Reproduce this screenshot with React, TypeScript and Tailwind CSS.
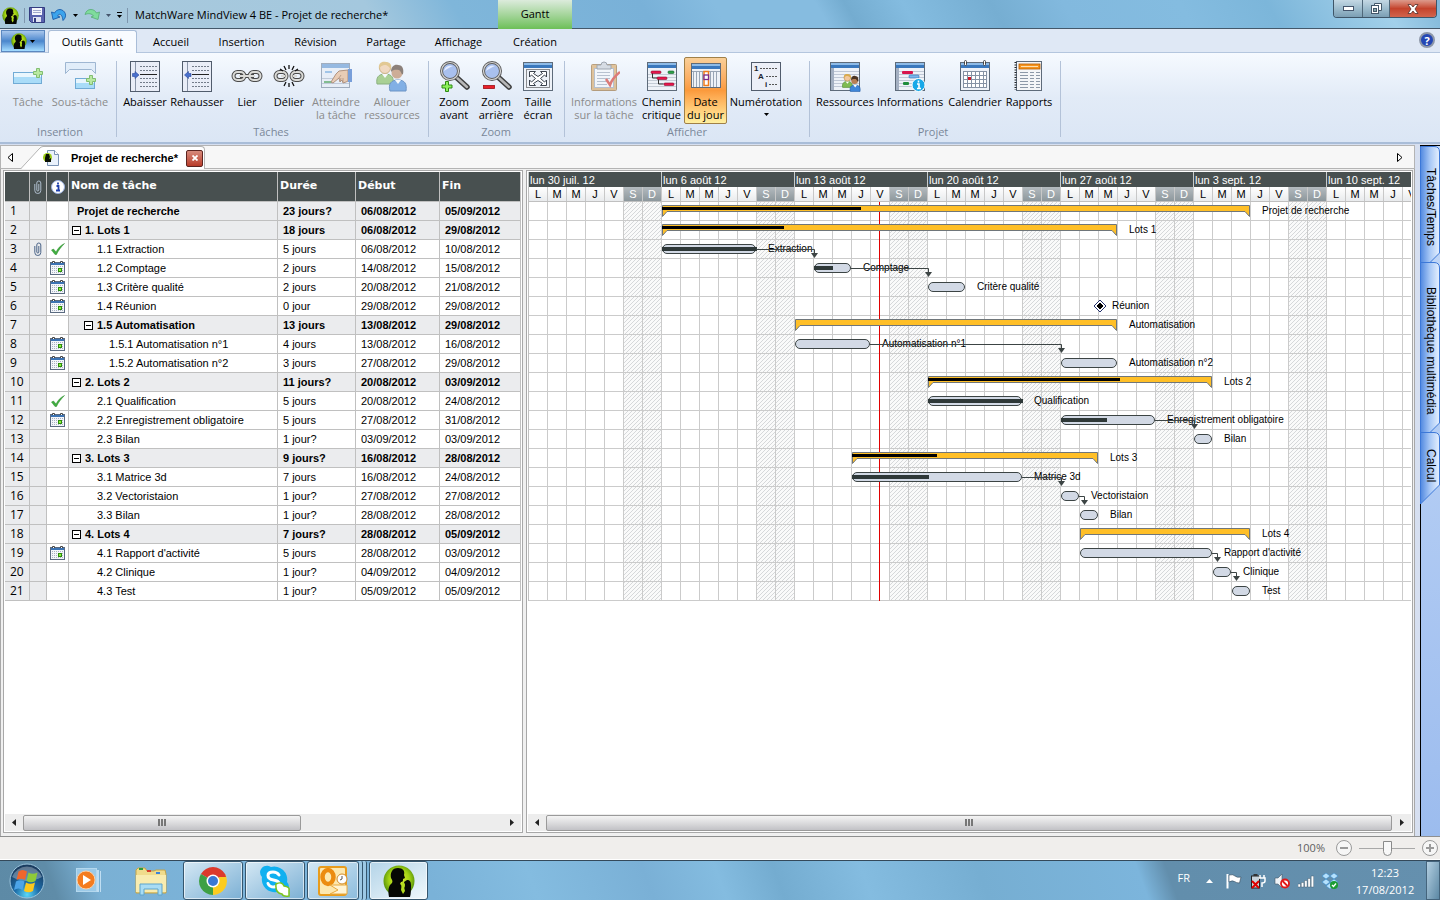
import React from 'react';
import clsx from 'clsx';

interface Task {
  id: number;
  name: string;
  duration: string;
  start: string;
  end: string;
  level: number;
  summary?: boolean;
  mark?: 'check' | 'calendar';
  clip?: boolean;
  // chart values, in days counted from monday 30 july
  from: number;
  to: number;
  progress?: number;
  milestone?: boolean;
  label?: string;
}

const TASKS: Task[] = [
  { id: 1, name: 'Projet de recherche', duration: '23 jours?', start: '06/08/2012', end: '05/09/2012', level: 0, summary: true, from: 7, to: 38, progress: 199 },
  { id: 2, name: '1. Lots 1', label: 'Lots 1', duration: '18 jours', start: '06/08/2012', end: '29/08/2012', level: 1, summary: true, from: 7, to: 31, progress: 122 },
  { id: 3, name: '1.1 Extraction', label: 'Extraction', duration: '5 jours', start: '06/08/2012', end: '10/08/2012', level: 2, mark: 'check', clip: true, from: 7, to: 12, progress: 95 },
  { id: 4, name: '1.2 Comptage', label: 'Comptage', duration: '2 jours', start: '14/08/2012', end: '15/08/2012', level: 2, mark: 'calendar', from: 15, to: 17, progress: 19 },
  { id: 5, name: '1.3 Critère qualité', label: 'Critère qualité', duration: '2 jours', start: '20/08/2012', end: '21/08/2012', level: 2, mark: 'calendar', from: 21, to: 23 },
  { id: 6, name: '1.4 Réunion', label: 'Réunion', duration: '0 jour', start: '29/08/2012', end: '29/08/2012', level: 2, mark: 'calendar', from: 30, to: 30, milestone: true },
  { id: 7, name: '1.5 Automatisation', label: 'Automatisation', duration: '13 jours', start: '13/08/2012', end: '29/08/2012', level: 2, summary: true, from: 14, to: 31 },
  { id: 8, name: '1.5.1 Automatisation n°1', label: 'Automatisation n°1', duration: '4 jours', start: '13/08/2012', end: '16/08/2012', level: 3, mark: 'calendar', from: 14, to: 18 },
  { id: 9, name: '1.5.2 Automatisation n°2', label: 'Automatisation n°2', duration: '3 jours', start: '27/08/2012', end: '29/08/2012', level: 3, mark: 'calendar', from: 28, to: 31 },
  { id: 10, name: '2. Lots 2', label: 'Lots 2', duration: '11 jours?', start: '20/08/2012', end: '03/09/2012', level: 1, summary: true, from: 21, to: 36, progress: 192 },
  { id: 11, name: '2.1 Qualification', label: 'Qualification', duration: '5 jours', start: '20/08/2012', end: '24/08/2012', level: 2, mark: 'check', from: 21, to: 26, progress: 95 },
  { id: 12, name: '2.2 Enregistrement obligatoire', label: 'Enregistrement obligatoire', duration: '5 jours', start: '27/08/2012', end: '31/08/2012', level: 2, mark: 'calendar', from: 28, to: 33, progress: 46 },
  { id: 13, name: '2.3 Bilan', label: 'Bilan', duration: '1 jour?', start: '03/09/2012', end: '03/09/2012', level: 2, from: 35, to: 36 },
  { id: 14, name: '3. Lots 3', label: 'Lots 3', duration: '9 jours?', start: '16/08/2012', end: '28/08/2012', level: 1, summary: true, from: 17, to: 30, progress: 85 },
  { id: 15, name: '3.1 Matrice 3d', label: 'Matrice 3d', duration: '7 jours', start: '16/08/2012', end: '24/08/2012', level: 2, from: 17, to: 26, progress: 77 },
  { id: 16, name: '3.2 Vectoristaion', label: 'Vectoristaion', duration: '1 jour?', start: '27/08/2012', end: '27/08/2012', level: 2, from: 28, to: 29 },
  { id: 17, name: '3.3 Bilan', label: 'Bilan', duration: '1 jour?', start: '28/08/2012', end: '28/08/2012', level: 2, from: 29, to: 30 },
  { id: 18, name: '4. Lots 4', label: 'Lots 4', duration: '7 jours?', start: '28/08/2012', end: '05/09/2012', level: 1, summary: true, from: 29, to: 38 },
  { id: 19, name: "4.1 Rapport d'activité", label: "Rapport d'activité", duration: '5 jours', start: '28/08/2012', end: '03/09/2012', level: 2, mark: 'calendar', from: 29, to: 36 },
  { id: 20, name: '4.2 Clinique', label: 'Clinique', duration: '1 jour?', start: '04/09/2012', end: '04/09/2012', level: 2, from: 36, to: 37 },
  { id: 21, name: '4.3 Test', label: 'Test', duration: '1 jour?', start: '05/09/2012', end: '05/09/2012', level: 2, from: 37, to: 38 },
];

// [id of the source task, x of the arrow that points at the next row]
const LINKS: [number, number][] = [
  [3, 285],
  [4, 399],
  [8, 532],
  [12, 665],
  [15, 532],
  [16, 555],
  [19, 688],
  [20, 707],
];

const WEEKS = ['lun 30 juil. 12', 'lun 6 août 12', 'lun 13 août 12', 'lun 20 août 12', 'lun 27 août 12', 'lun 3 sept. 12', 'lun 10 sept. 12'];
const DAYS = ['L', 'M', 'M', 'J', 'V', 'S', 'D'];
const DAY = 19;
const ROW = 19;
const TODAY = 350;

/* ---------- icons ---------- */

const Logo = ({ className }: { className?: string }) => (
  <svg viewBox="0 0 32 32" className={className}>
    <defs>
      <radialGradient id="logo-green" cx="50%" cy="45%" r="55%">
        <stop offset="0" stopColor="#e6f23a" />
        <stop offset="0.6" stopColor="#a4d414" />
        <stop offset="1" stopColor="#4f8c0a" />
      </radialGradient>
    </defs>
    <circle cx="16" cy="16" r="15.5" fill="url(#logo-green)" />
    <path d="M6 32c-1-6-1-11 3-14 1-2 0-3-1-5-1-5 1-10 7-10 5 0 7 3 6 7l1 3-2 1c0 2 0 3-2 3l-1 2c2 1 2 4 3 7l2-5-1-4 3-2c3 0 4 2 4 5 0 5 0 9-1 12z" fill="#060804" />
    <path d="M19 17l3 2-1 3 1 4-2 3-2-4z" fill="#b4dc20" />
  </svg>
);

const Win = ({ children, faded }: { children?: React.ReactNode; faded?: boolean }) => (
  <svg viewBox="0 0 32 32" className={clsx('size-8', faded && 'opacity-50')}>
    <rect x="1.5" y="2.5" width="29" height="28" fill="#eef2f8" stroke="#5e6b7a" />
    <rect x="2" y="3" width="28" height="5" fill="#3a78bd" />
    <rect x="2" y="3" width="28" height="2" fill="#8dbbe8" />
    {children}
  </svg>
);

const People = ({ x = 0, y = 0, s = 1 }: { x?: number; y?: number; s?: number }) => (
  <g transform={`translate(${x} ${y}) scale(${s})`}>
    <path d="M1 24c-1-6 1-10 8-10s9 4 8 10z" fill="#7fbb52" stroke="#4d8730" />
    <path d="M6 14l3 4 3-4z" fill="#fff" />
    <circle cx="9" cy="8" r="5.5" fill="#f2c79b" stroke="#b98a3c" />
    <path d="M3 9C2 3 6 1 10 2c5 0 6 4 5 8-1-3-4-5-6-5S4 6 3 9z" fill="#d9ab4f" />
    <path d="M14 31c-2-7 1-11 8-11s9 4 8 11z" fill="#3f86d8" stroke="#1f5aa4" />
    <path d="M19 20l3 4 3-4z" fill="#fff" />
    <circle cx="21" cy="13" r="5.5" fill="#b87f55" />
    <path d="M15 12c0-6 4-8 7-7 5 0 6 5 5 9-1 2-2-3-4-4-3 0-5-1-8 2z" fill="#4a3424" />
  </g>
);

const PlusMark = ({ x, y }: { x: number; y: number }) => (
  <path transform={`translate(${x} ${y})`} d="M3.5 .5h3v3h3v3h-3v3h-3v-3h-3v-3h3z" fill="#a4e67c" stroke="#55a838" />
);

const TaskIcon = () => (
  <svg viewBox="0 0 32 32" className="size-8 opacity-70">
    <rect x="1.5" y="12.5" width="28" height="11" fill="#8fd4f8" stroke="#3f8ec6" />
    <rect x="2" y="13" width="27" height="4" fill="#e8f8ff" />
    <PlusMark x={21} y={8} />
  </svg>
);

const SubTaskIcon = () => (
  <svg viewBox="0 0 32 32" className="size-8 opacity-70">
    <path d="M1.500 13.500V2.500h30v11l-4-4h-22z" fill="#dceaf8" stroke="#7c9cc0" />
    <rect x="11.500" y="18.500" width="19" height="10" fill="#8fd4f8" stroke="#3f8ec6" />
    <rect x="12" y="19" width="18" height="4" fill="#e8f8ff" />
    <PlusMark x={22} y={15} />
  </svg>
);

const IndentIcon = ({ out }: { out?: boolean }) => (
  <svg viewBox="0 0 32 32" className="size-8">
    <rect x="1.500" y="1.500" width="29" height="30" fill="#e9edf7" stroke="#515c6c" />
    <path d="M6.500 2v29" stroke="#8a95a8" />
    <path d="M11 6.500h17M11 10.500h17M11 18.500h17M11 22.500h17M11 26.500h17" stroke="#737c8a" strokeDasharray="2 1" />
    <path d="M11 14.500h17" stroke="#222" />
    {out ? (
      <path d="M10 13.500H7.500v-2L3.500 15l4 3.500v-2H10z" fill="#4a70cc" stroke="#2848a0" strokeWidth=".6" />
    ) : (
      <path d="M3.500 13.500H6v-2l4 3.500-4 3.500v-2H3.500z" fill="#4a70cc" stroke="#2848a0" strokeWidth=".6" />
    )}
  </svg>
);

const ChainIcon = ({ broken }: { broken?: boolean }) => (
  <svg viewBox="0 0 32 32" className="size-8" fill="none">
    <g stroke="#4a4a4a" strokeWidth="4">
      <rect x="2.500" y="12" width="11" height="8" rx="4" />
      <rect x="18.500" y="12" width="11" height="8" rx="4" />
      {!broken && <path d="M9 16h14" />}
    </g>
    <g stroke="#dcdcd8" strokeWidth="2">
      <rect x="2.500" y="12" width="11" height="8" rx="4" />
      <rect x="18.500" y="12" width="11" height="8" rx="4" />
      <path d={broken ? 'M8 16h4M20 16h4' : 'M8 16h16'} />
    </g>
    {broken && (
      <path d="M16 5v4M11 6l2 4M21 6l-2 4M7 9l3 2M25 9l-3 2M16 23v4M11 26l2-4M21 26l-2-4" stroke="#111" strokeWidth="1.300" />
    )}
  </svg>
);

const GoToIcon = () => (
  <svg viewBox="0 0 32 32" className="size-8 opacity-60">
    <rect x="1.500" y="3.500" width="28" height="24" fill="#e6ecf5" stroke="#6f7f95" />
    <rect x="2" y="4" width="27" height="4" fill="#5b92d0" />
    <path d="M2 18.500h27M2 23.500h27" stroke="#a6b2c4" />
    <rect x="4" y="21" width="8" height="2" fill="#3f9a4c" />
    <rect x="5" y="11" width="7" height="2" fill="#6fa6dc" />
    <path d="M11 22l2 1 6-5 1 4 2-2 1 3 3-1 2-1V10l-9 1-3 3z" fill="#e8b488" stroke="#8a5530" />
    <path d="M19 18l2-3M20 22l1-4M23 22v-4" stroke="#8a5530" strokeWidth=".8" />
    <rect x="28" y="9" width="4" height="13" fill="#2c68c4" />
  </svg>
);

const MagnifierIcon = ({ minus }: { minus?: boolean }) => (
  <svg viewBox="0 0 32 32" className="size-8">
    <path d="M18 17l11 10" stroke="#3e3e3e" strokeWidth="5.500" strokeLinecap="round" />
    <path d="M18 17l11 10" stroke="#b8b8b8" strokeWidth="2.500" strokeLinecap="round" />
    <circle cx="12" cy="11" r="8.500" fill="#a9c0ee" stroke="#5c5c5c" strokeWidth="3" />
    <circle cx="12" cy="11" r="8.500" fill="none" stroke="#d5d5d5" strokeWidth="1.200" />
    <path d="M6 11c1-5 5-6 9-5-3 1-6 3-9 5z" fill="#e2ebff" />
    {minus ? (
      <rect x="3.500" y="25.500" width="11" height="3" fill="#e8202a" stroke="#9c1016" strokeWidth=".8" />
    ) : (
      <path d="M7.500 21.500h3v3.500h3.500v3h-3.500v3.500h-3V28H4v-3h3.500z" fill="#8cf05c" stroke="#2f8a14" />
    )}
  </svg>
);

const FitIcon = () => (
  <Win>
    <rect x="4.500" y="9.500" width="23" height="18" fill="none" stroke="#222" strokeDasharray="1 1" />
    <path d="M7.500 11.500h6l-2 2 4.500 3 4.500-3-2-2h6v5.500l-2-2-4 3.500 4 3.500 2-2v5.500h-6l2-2-4.500-3-4.500 3 2 2h-6V20l2 2 4-3.500-4-3.500-2 2z" fill="#fff" stroke="#3c434d" />
  </Win>
);

const ClipboardIcon = () => (
  <svg viewBox="0 0 32 32" className="size-8 opacity-60">
    <rect x="3.500" y="4.500" width="25" height="26" rx="1" fill="#d7a35c" stroke="#94672c" />
    <rect x="6.500" y="8.500" width="19" height="19" fill="#f6f8fb" stroke="#93a0b2" />
    <path d="M9 12.500h13M9 15.500h13M9 18.500h13M9 21.500h10M9 24.500h10" stroke="#96a2b4" />
    <path d="M9 5h4a3 3 0 0 1 6 0h4v4H9z" fill="#c6ccd4" stroke="#68727f" />
    <path d="M18 19l4 6c2-6 5-9 10-13" stroke="#d42c22" strokeWidth="2.500" fill="none" />
  </svg>
);

const CriticalIcon = () => (
  <Win>
    <path d="M2 14.500h28M2 17.500h28M2 20.500h28M2 23.500h28M2 26.500h28" stroke="#c4ccd6" />
    <path d="M6.500 13v5h5M12.500 19v5h5" stroke="#333" fill="none" />
    <rect x="5" y="11" width="10" height="2.500" rx="1" fill="#e8144c" stroke="#8a0a2c" strokeWidth=".6" />
    <rect x="22" y="11" width="6" height="2.500" rx="1" fill="#2ea24a" stroke="#146028" strokeWidth=".6" />
    <rect x="11" y="17" width="10" height="2.500" rx="1" fill="#e8144c" stroke="#8a0a2c" strokeWidth=".6" />
    <rect x="18" y="23" width="10" height="2.500" rx="1" fill="#e8144c" stroke="#8a0a2c" strokeWidth=".6" />
  </Win>
);

const TodayIcon = () => (
  <svg viewBox="0 0 32 32" className="size-8">
    <rect x="1.500" y="3.500" width="29" height="24" fill="#eef2f8" stroke="#5e6b7a" />
    <rect x="2" y="4" width="28" height="5" fill="#3a78bd" />
    <rect x="2" y="4" width="28" height="2" fill="#8dbbe8" />
    <path d="M2 11.500h28M3.500 12v15M6.500 12v15M9.500 12v15M12.500 12v15M20.500 12v15M23.500 12v15M26.500 12v15" stroke="#9aa6b6" />
    <rect x="14" y="11.500" width="4.500" height="14" fill="#fff" stroke="#f07c1c" strokeWidth="1.500" />
    <rect x="14" y="15" width="4.500" height="4.500" fill="#fff" stroke="#7a2a8a" strokeWidth="1.300" />
  </svg>
);

const NumberingIcon = () => (
  <svg viewBox="0 0 32 32" className="size-8">
    <rect x="1.500" y="2.500" width="29" height="28" fill="#eceff7" stroke="#515c6c" />
    <g fontFamily="Liberation Sans, sans-serif" fontWeight="bold" fontSize="8" fill="#1c2430">
      <text x="4" y="11">1</text>
      <text x="8" y="19">A</text>
      <text x="15" y="27">i</text>
    </g>
    <path d="M10 8.500h18M16 16.500h12M19 24.500h9" stroke="#555" strokeDasharray="2 1" />
  </svg>
);

const Lines = () => (
  <>
    <rect x="2" y="8" width="3" height="22" fill="#a4b0c2" />
    <path d="M5 11.500h25M5 14.500h25M5 17.500h25M5 20.500h25M5 23.500h25M5 26.500h25" stroke="#c0c8d6" />
  </>
);

const ResourcesIcon = () => (
  <Win>
    <Lines />
    <People x={13} y={13} s={0.6} />
  </Win>
);

const InfoIcon = () => (
  <Win>
    <Lines />
    <rect x="8" y="11" width="11" height="3" rx="1" fill="#d8144c" />
    <rect x="15" y="15" width="10" height="3" rx="1" fill="#7ab8ee" stroke="#2e6cb0" strokeWidth=".6" />
    <rect x="9" y="22" width="6" height="3" rx="1" fill="#1f8c3c" />
    <circle cx="24.500" cy="25" r="6.500" fill="#18a8e8" stroke="#fff" />
    <path d="M24.500 20.500v2M23 24h2v4M23 28.500h4" stroke="#fff" strokeWidth="1.600" fill="none" />
  </Win>
);

const CalendarIcon = () => (
  <Win>
    <rect x="4.500" y="11.500" width="23" height="16" fill="#fff" stroke="#8592a4" />
    <path d="M4 15.500h24M4 19.500h24M4 23.500h24M8.500 12v16M12.500 12v16M16.500 12v16M20.500 12v16M24.500 12v16" stroke="#8592a4" />
    <rect x="9" y="17" width="3" height="3" fill="#d01828" />
    <rect x="5.500" y=".500" width="2" height="5" rx="1" fill="#fff" stroke="#444" />
    <rect x="24.500" y=".500" width="2" height="5" rx="1" fill="#fff" stroke="#444" />
  </Win>
);

const ReportIcon = () => (
  <svg viewBox="0 0 32 32" className="size-8">
    <rect x="3.500" y="1.500" width="25" height="29" fill="#f4f5f8" stroke="#5e6b7a" />
    <path d="M2.500 2v28" stroke="#222" strokeWidth="2" strokeDasharray="1 1.500" />
    <rect x="6" y="4" width="21" height="5" fill="#f7941e" stroke="#b45c04" strokeWidth=".8" />
    <path d="M8 6.500h17" stroke="#fde0b0" />
    <path d="M7 12.500h8M17 12.500h4M23 12.500h4M7 15.500h8M17 15.500h4M23 15.500h4M7 18.500h8M17 18.500h4M23 18.500h4M7 21.500h8M17 21.500h4M23 21.500h4M7 24.500h8M17 24.500h4M23 24.500h4M7 27.500h8M17 27.500h4M23 27.500h4" stroke="#8d98a8" />
  </svg>
);

const PaperclipIcon = ({ light }: { light?: boolean }) => (
  <svg viewBox="0 0 8 14" className="h-[14px] w-2" fill="none">
    <path d="M.8 4v6.500a3 3 0 0 0 6 0V3a2 2 0 0 0-4 0v7a1 1 0 0 0 2 0V4" stroke={light ? '#aebccc' : '#4b6488'} />
  </svg>
);

const CheckIcon = () => (
  <svg viewBox="0 0 14 12" className="h-3 w-[14px]">
    <path d="M.5 7l2-1 2.500 3C7 5 10 2 13.500.5 10 4 7 8 5.500 11.500H4z" fill="#3fae3f" stroke="#2f8a2f" strokeWidth=".5" />
  </svg>
);

const SmallCalendarIcon = () => (
  <svg viewBox="0 0 16 16" className="size-4">
    <rect x=".5" y="2.500" width="14" height="12" fill="#f4f6fa" stroke="#5a6a80" />
    <rect x="1" y="3" width="13" height="2" fill="#3d74b4" />
    <path d="M2.500 6v8M4.500 6v8M6.500 6v8M8.500 6v8M10.500 6v8M12.500 6v8" stroke="#a8b2c2" strokeDasharray="1 1" />
    <rect x="8.500" y="8.500" width="3" height="3" fill="#8cf03c" stroke="#2c8c0c" />
    <path d="M2.500 3V1.500h2V3M10.500 3V1.500h2V3" stroke="#444" fill="#fff" />
  </svg>
);

const Caret = ({ className }: { className?: string }) => (
  <svg viewBox="0 0 5 3" className={clsx('h-[3px] w-[5px]', className)}>
    <path d="M0 0h5L2.500 3z" fill="currentColor" />
  </svg>
);

/* ---------- title bar ---------- */

const TitleBar = () => (
  <header className="relative flex h-[29px] shrink-0 items-center border-b border-[#44586a] bg-[linear-gradient(60deg,#a9c9dc_0%,#a4c8de_26%,#7fb6da_32%,#79b1d8_45%,#86bce0_50%,#86bce0_57%,#74acd0_59%,#84bce0_63%,#76aed2_69%,#82b9de_74%,#84bce0_82%,#7cb6da_88%,#a2d0ea_96%,#7fb6d8_100%)] pt-[2px] pl-[2px] text-[11px] text-black">
    <Logo className="size-[17px]" />
    <span className="ml-[5px] h-[15px] w-px bg-slate-500/60" />
    <button aria-label="Enregistrer" className="ml-1">
      <svg viewBox="0 0 16 16" className="size-4">
        <path d="M.5.5h15v15h-13l-2-2z" fill="#5a63ae" stroke="#343c80" />
        <rect x="3" y="1" width="10" height="7" fill="#f4f6fc" />
        <path d="M4 3.500h8M4 5.500h8" stroke="#a0a8cc" />
        <rect x="4" y="10" width="8" height="5" fill="#dfe3f2" />
        <rect x="5" y="11" width="2" height="4" fill="#343c80" />
      </svg>
    </button>
    <button aria-label="Annuler" className="ml-[6px] flex items-center gap-[6px]">
      <svg viewBox="0 0 16 14" className="h-[14px] w-4">
        <path d="M.5 4l1.500 7.500L9 9 6.500 8C8 5.500 11 5 12 12.500 17 8 14 2 9 1.500 6.500 1.500 4.500 3 3.500 5z" fill="#3ca4ec" stroke="#1a5cac" strokeWidth=".9" />
      </svg>
      <Caret />
    </button>
    <button aria-label="Rétablir" className="ml-[6px] flex items-center gap-[6px] text-slate-600">
      <svg viewBox="0 0 16 14" className="h-[14px] w-4">
        <path d="M15.500 4L14 11.500 7 9l2.500-1C8 5.500 4 5 1 6.500 2 3 4 1.500 7 1.500 9.500 1.500 11.500 3 12.500 5z" fill="#7fdc9c" stroke="#5cb07c" strokeWidth=".9" />
      </svg>
      <Caret />
    </button>
    <button aria-label="Personnaliser la barre" className="ml-[6px] flex flex-col items-center gap-[2px]">
      <span className="h-px w-[5px] bg-black" />
      <Caret />
    </button>
    <span className="mr-[7px] ml-[5px] h-[15px] w-px bg-slate-500/60" />
    <h1>MatchWare MindView 4 BE - Projet de recherche*</h1>

    {/* contextual tab title */}
    <div className="absolute top-0 left-[498px] flex h-[29px] w-[74px] items-center justify-center bg-linear-to-b from-[#dcebdc] to-[#6cbf57]">Gantt</div>

    <div className="absolute top-0 right-[3px] flex h-[18px] overflow-hidden rounded-b border border-t-0 border-[#3e5568] text-white">
      <button aria-label="Réduire" className="flex w-7 items-center justify-center bg-linear-to-b from-[#c4d8e4] via-[#9dbccd] to-[#7c9fb4]">
        <span className="h-[5px] w-[11px] border border-slate-600 bg-white" />
      </button>
      <button aria-label="Restaurer" className="flex w-[27px] items-center justify-center border-l border-[#4f687a] bg-linear-to-b from-[#c4d8e4] via-[#9dbccd] to-[#7c9fb4]">
        <svg viewBox="0 0 11 11" className="size-[11px]">
          <path d="M3.500 3V.5h7v7H8" fill="#fff" stroke="#44586a" />
          <rect x=".5" y="2.500" width="7" height="8" fill="#fff" stroke="#44586a" />
          <rect x="2.500" y="5.500" width="3" height="3" fill="#8aa" stroke="#44586a" />
        </svg>
      </button>
      <button aria-label="Fermer" className="flex w-[47px] items-center justify-center border-l border-[#4f687a] bg-linear-to-b from-[#dc9a8c] via-[#c4432c] to-[#d2644c]">
        <svg viewBox="0 0 12 10" className="h-[10px] w-3">
          <path d="M1 .5h3l2 2.500L8 .5h3L8 5l3 4.500H8L6 7 4 9.500H1L4 5z" fill="#fff" stroke="#54302c" strokeWidth=".8" />
        </svg>
      </button>
    </div>
  </header>
);

/* ---------- ribbon ---------- */

const TABS = [
  { label: 'Accueil', width: 'w-[68px]' },
  { label: 'Insertion', width: 'w-[73px]' },
  { label: 'Révision', width: 'w-[75px]' },
  { label: 'Partage', width: 'w-[66px]' },
  { label: 'Affichage', width: 'w-[79px]' },
  { label: 'Création', width: 'w-[74px]' },
];

interface Tool {
  lines: string[];
  icon: React.ReactNode;
  width: string;
  disabled?: boolean;
  active?: boolean;
  menu?: boolean;
}

const GROUPS: { title: string; pad: string; tools: Tool[] }[] = [
  {
    title: 'Insertion',
    pad: 'pl-2 pr-1',
    tools: [
      { lines: ['Tâche'], icon: <TaskIcon />, width: 'w-10', disabled: true },
      { lines: ['Sous-tâche'], icon: <SubTaskIcon />, width: 'w-16', disabled: true },
    ],
  },
  {
    title: 'Tâches',
    pad: 'pl-1 pr-[7px]',
    tools: [
      { lines: ['Abaisser'], icon: <IndentIcon />, width: 'w-12' },
      { lines: ['Rehausser'], icon: <IndentIcon out />, width: 'w-14' },
      { lines: ['Lier'], icon: <ChainIcon />, width: 'w-11' },
      { lines: ['Délier'], icon: <ChainIcon broken />, width: 'w-10' },
      { lines: ['Atteindre', 'la tâche'], icon: <GoToIcon />, width: 'w-[54px]', disabled: true },
      {
        lines: ['Allouer', 'ressources'],
        icon: <svg viewBox="0 0 32 32" className="size-8 opacity-60"><People /></svg>,
        width: 'w-[58px]',
        disabled: true,
      },
    ],
  },
  {
    title: 'Zoom',
    pad: 'pl-1 pr-[5px]',
    tools: [
      { lines: ['Zoom', 'avant'], icon: <MagnifierIcon />, width: 'w-[42px]' },
      { lines: ['Zoom', 'arrière'], icon: <MagnifierIcon minus />, width: 'w-[42px]' },
      { lines: ['Taille', 'écran'], icon: <FitIcon />, width: 'w-[42px]' },
    ],
  },
  {
    title: 'Afficher',
    pad: 'pl-1 pr-1',
    tools: [
      { lines: ['Informations', 'sur la tâche'], icon: <ClipboardIcon />, width: 'w-[70px]', disabled: true },
      { lines: ['Chemin', 'critique'], icon: <CriticalIcon />, width: 'w-[45px]' },
      { lines: ['Date', 'du jour'], icon: <TodayIcon />, width: 'w-[43px]', active: true },
      { lines: ['Numérotation'], icon: <NumberingIcon />, width: 'w-[78px]', menu: true },
    ],
  },
  {
    title: 'Projet',
    pad: 'pl-1 pr-2',
    tools: [
      { lines: ['Ressources'], icon: <ResourcesIcon />, width: 'w-[62px]' },
      { lines: ['Informations'], icon: <InfoIcon />, width: 'w-[68px]' },
      { lines: ['Calendrier'], icon: <CalendarIcon />, width: 'w-[62px]' },
      { lines: ['Rapports'], icon: <ReportIcon />, width: 'w-[46px]' },
    ],
  },
];

const ToolButton = ({ tool }: { tool: Tool }) => (
  <button
    disabled={tool.disabled}
    className={clsx(
      'flex h-[67px] flex-col items-center border pt-[2px] leading-[13px] whitespace-nowrap',
      tool.width,
      tool.disabled ? 'text-[#8b8b8b]' : 'text-black',
      tool.active
        ? 'rounded-xs border-[#a08048] bg-linear-to-b from-[#f9cf98] from-0% via-[#fb9a3c] via-50% to-[#fff0a0] to-100%'
        : 'border-transparent'
    )}
  >
    {tool.icon}
    <span className="mt-[3px] flex flex-col items-center">
      {tool.lines.map((line) => (
        <span key={line}>{line}</span>
      ))}
    </span>
    {tool.menu && <Caret className="mt-[5px]" />}
  </button>
);

const Ribbon = () => (
  <nav className="shrink-0 border-b-2 border-[#a9bdd8] bg-[#dfe8f5] text-[11px] text-black">
    <div className="flex h-6 items-end border-b border-[#b4c6de] pl-px">
      <button aria-label="Menu MindView" className="flex h-[22px] w-[44px] items-center justify-center gap-[3px] border border-[#5c88c0] bg-linear-to-b from-[#a8c6ec] via-[#4a86cc] to-[#a4dcff]">
        <Logo className="size-4" />
        <Caret />
      </button>
      <button className="-mb-px ml-[3px] h-[23px] w-[89px] rounded-t-[3px] border border-b-0 border-[#a9bdd8] bg-[#f8fbff]">Outils Gantt</button>
      {TABS.map((tab) => (
        <button key={tab.label} className={clsx('h-[22px] pt-[2px]', tab.width)}>
          {tab.label}
        </button>
      ))}
      <button aria-label="Aide" className="mr-[5px] mb-1 ml-auto flex size-4 items-center justify-center rounded-full border-2 border-[#8d97a8] bg-[#2347b4] text-[11px] leading-none font-bold text-white">
        ?
      </button>
    </div>
    <div className="flex h-[89px] bg-linear-to-b from-[#f6faff] via-[#e2ebf7] to-[#dbe6f5] pt-1">
      {GROUPS.map((group) => (
        <section key={group.title} className="flex">
          <div className={clsx('flex flex-col', group.pad)}>
            <div className="flex">
              {group.tools.map((tool) => (
                <ToolButton key={tool.lines.join()} tool={tool} />
              ))}
            </div>
            <h2 className="text-center leading-4 text-[#7a8799]">{group.title}</h2>
          </div>
          <span className="mt-1 h-[76px] w-px bg-[#b3c2d8]" />
        </section>
      ))}
    </div>
  </nav>
);

/* ---------- document tabs ---------- */

const DocumentTabs = () => (
  <div className="flex h-6 shrink-0 items-end border border-[#b4b4b4] bg-[#f7f7f7]">
    <button aria-label="Onglet précédent" className="flex h-[22px] w-[20px] items-center pl-[6px]">
      <svg viewBox="0 0 6 9" className="h-[9px] w-[6px]">
        <path d="M5.500.5v8l-4.500-4z" fill="#fff" stroke="#000" />
      </svg>
    </button>
    <svg viewBox="0 0 22 23" className="-mb-px h-[23px] w-[22px]">
      <path d="M0 23L18 3Q20 .5 22 .5V23z" fill="#fff" />
      <path d="M0 22.500L18 3Q20 .5 22 .5" fill="none" stroke="#b4b4b4" />
    </svg>
    <div className="-mb-px flex h-[23px] w-[162px] items-center rounded-tr-sm border-t border-r border-[#b4b4b4] bg-white">
      <svg viewBox="0 0 16 16" className="size-4">
        <path d="M4.500.5h7l4 4v11h-11z" fill="#eaf2fc" stroke="#7a93b4" />
        <path d="M11.500.5v4h4" fill="#fff" stroke="#7a93b4" />
        <circle cx="4.500" cy="7.500" r="4.500" fill="#9ccc18" />
        <path d="M2 12V8l1-4h3l1 3-1 2 2-1v4z" fill="#0a1004" />
      </svg>
      <span className="ml-3 font-['Liberation_Sans',Arial,sans-serif] text-[11px] font-bold">Projet de recherche*</span>
      <button aria-label="Fermer le document" className="mr-px ml-auto flex size-[17px] items-center justify-center rounded-xs border border-[#5c2420] bg-linear-to-b from-[#d68a7c] to-[#b83a28]">
        <svg viewBox="0 0 6 6" className="size-[6px]">
          <path d="M.5.5l5 5M5.500.5l-5 5" stroke="#fff" strokeWidth="1.800" />
        </svg>
      </button>
    </div>
    <button aria-label="Onglet suivant" className="mr-[11px] ml-auto flex h-[22px] items-center">
      <svg viewBox="0 0 6 9" className="h-[9px] w-[6px]">
        <path d="M.5.5v8l4.500-4z" fill="#fff" stroke="#000" />
      </svg>
    </button>
  </div>
);

/* ---------- scroll bars ---------- */

const ScrollBar = ({ thumb }: { thumb: string }) => (
  <div className="flex h-[17px] shrink-0 items-center bg-[#ededed]">
    <button aria-label="Défiler à gauche" className="flex w-[18px] shrink-0 justify-center">
      <svg viewBox="0 0 4 7" className="h-[7px] w-1"><path d="M4 0v7L0 3.500z" fill="#222" /></svg>
    </button>
    <div className="min-w-0 flex-1">
      <div className={clsx('flex h-4 items-center justify-center gap-px rounded-xs border border-[#9a9a9a] bg-linear-to-b from-[#f4f4f4] via-[#dcdcde] via-50% to-[#c2c2c6]', thumb)}>
        <span className="h-[7px] w-[2px] bg-[#777]" />
        <span className="h-[7px] w-[2px] bg-[#777]" />
        <span className="h-[7px] w-[2px] bg-[#777]" />
      </div>
    </div>
    <button aria-label="Défiler à droite" className="flex w-[19px] shrink-0 justify-center">
      <svg viewBox="0 0 4 7" className="h-[7px] w-1"><path d="M0 0v7l4-3.500z" fill="#222" /></svg>
    </button>
  </div>
);

/* ---------- task table ---------- */

const indentOf = (task: Task) => {
  if (task.level === 0) return 'pl-2';
  if (task.summary) return task.level === 1 ? 'pl-[3px]' : 'pl-[15px]';
  return task.level === 2 ? 'pl-7' : 'pl-10';
};

const TaskTable = () => (
  <table className="w-full table-fixed border-separate border-spacing-0 font-['Liberation_Sans',Arial,sans-serif] text-[11px] text-black">
    <colgroup>
      <col className="w-[25px]" />
      <col className="w-[17px]" />
      <col className="w-[22px]" />
      <col className="w-[209px]" />
      <col className="w-[78px]" />
      <col className="w-[84px]" />
      <col />
    </colgroup>
    <thead>
      <tr className="h-[30px] bg-[#485050] text-left font-['DejaVu_Sans',Verdana,sans-serif] text-white [&>th]:border-r [&>th]:border-b [&>th]:border-[#c0c0c0] [&>th]:px-[2px] [&>th]:py-0">
        <th aria-label="Numéro" />
        <th aria-label="Pièce jointe"><span className="flex justify-center"><PaperclipIcon light /></span></th>
        <th aria-label="Information">
          <span className="flex justify-center">
            <svg viewBox="0 0 14 14" className="size-[14px]">
              <circle cx="7" cy="7" r="6.500" fill="#fff" stroke="#9ab0e0" />
              <path d="M7 2.500v2M5.500 6H7.500v4M5 10.500h4" stroke="#1c3cac" strokeWidth="1.800" fill="none" />
            </svg>
          </span>
        </th>
        <th>Nom de tâche</th>
        <th>Durée</th>
        <th>Début</th>
        <th>Fin</th>
      </tr>
    </thead>
    <tbody>
      {TASKS.map((task) => (
        <tr
          key={task.id}
          className={clsx(
            'leading-[18px] whitespace-nowrap [&>td]:h-[19px] [&>td]:overflow-hidden [&>td]:border-r [&>td]:border-b [&>td]:border-[#c0c0c0] [&>td]:py-0',
            task.summary && 'bg-[#ebecee] font-bold'
          )}
        >
          <td className="bg-[#ebecee] pl-[5px] font-['Open_Sans','Noto_Sans',sans-serif] text-[12px] font-normal">{task.id}</td>
          <td className="bg-[#ebecee]"><span className="flex justify-center">{task.clip && <PaperclipIcon />}</span></td>
          <td className="bg-white">
            <span className="flex justify-center">
              {task.mark === 'check' && <CheckIcon />}
              {task.mark === 'calendar' && <SmallCalendarIcon />}
            </span>
          </td>
          <td className={indentOf(task)}>
            <span className="flex items-center gap-1">
              {task.summary && task.level > 0 && (
                <button aria-label="Réduire le groupe" className="flex size-[9px] items-center justify-center border border-black bg-white">
                  <span className="h-px w-[5px] bg-black" />
                </button>
              )}
              {task.name}
            </span>
          </td>
          <td className="pl-[5px]">{task.duration}</td>
          <td className="pl-[5px]">{task.start}</td>
          <td className="pl-[5px]">{task.end}</td>
        </tr>
      ))}
    </tbody>
  </table>
);

/* ---------- gantt chart ---------- */

const SummaryBar = ({ x, y, w, progress }: { x: number; y: number; w: number; progress?: number }) => (
  <g>
    <path
      d={`M${x + 0.5} ${y + 3.5}H${x + w - 1.5}V${y + 14.5}L${x + w - 6} ${y + 9.5}H${x + 5}L${x + 0.5} ${y + 14.5}Z`}
      fill="#ffbf27"
      stroke="#6f767a"
    />
    {progress && <rect x={x} y={y + 5} width={progress} height="3" fill="#000" />}
  </g>
);

const TaskBar = ({ x, y, w, progress }: { x: number; y: number; w: number; progress?: number }) => (
  <g>
    <rect x={x + 0.5} y={y + 4.5} width={w - 2} height="9" rx="4.5" fill="#d2d9e5" stroke="#3c4444" />
    {progress && <rect x={x} y={y + 7} width={progress} height="4" fill="#2e3838" />}
  </g>
);

const GanttChart = () => {
  const days = Array.from({ length: 100 }, (_, i) => i);
  const height = TASKS.length * ROW;

  return (
    <div className="overflow-hidden font-['Liberation_Sans',Arial,sans-serif] text-black">
      <div className="flex h-[15px] bg-[#485050] text-[11px] leading-[17px] text-white">
        {WEEKS.map((week) => (
          <div key={week} className="w-[133px] shrink-0 border-l border-[#c8cccc] pl-px whitespace-nowrap">{week}</div>
        ))}
      </div>
      <div className="flex h-[15px] border-b border-l border-[#c0c0c0] text-[11px] leading-[14px]">
        {WEEKS.map((week) => (
          <div key={week} className="flex shrink-0">
            {DAYS.map((day, i) => (
              <span
                key={i}
                className={clsx(
                  'w-[19px] border-r border-[#c8c8c8] text-center',
                  i > 4 ? 'bg-linear-to-b from-[#b4bbbf] to-[#8d979c] text-white' : 'bg-linear-to-b from-white to-[#e9ebed]'
                )}
              >
                {day}
              </span>
            ))}
          </div>
        ))}
      </div>
      <div className="border-l border-[#c0c0c0]">
        <svg className="block w-full" height={height} role="img" aria-label="Diagramme de Gantt">
          <defs>
            <pattern id="hatch" width="4" height="4" patternUnits="userSpaceOnUse">
              <rect width="4" height="4" fill="#fafafa" />
              <path d="M-1 1L1-1M0 4L4 0M3 5L5 3" stroke="#d6d8da" strokeWidth="1" />
            </pattern>
          </defs>
          {days.filter((d) => d % 7 > 4).map((d) => (
            <rect key={d} x={d * DAY} y="0" width={DAY} height={height} fill="url(#hatch)" />
          ))}
          <g fill="#cbcbcb">
            {days.map((d) => (
              <rect key={d} x={d * DAY + DAY - 1} y="0" width="1" height={height} />
            ))}
            {TASKS.map((t) => (
              <rect key={t.id} x="0" y={t.id * ROW - 1} width="100%" height="1" />
            ))}
          </g>
          <rect x={TODAY} y="0" width="1" height={height} fill="#e00000" />
          {TASKS.map((t) => {
            const x = t.from * DAY;
            const y = (t.id - 1) * ROW;
            const w = (t.to - t.from) * DAY;
            return (
              <g key={t.id}>
                {t.summary && <SummaryBar x={x} y={y} w={w} progress={t.progress} />}
                {!t.summary && !t.milestone && <TaskBar x={x} y={y} w={w} progress={t.progress} />}
                {t.milestone && (
                  <>
                    <path d={`M${x - 5} ${y + 9}l6-6 6 6-6 6z`} fill="#fff" stroke="#22306c" />
                    <path d={`M${x - 2} ${y + 9}l3-3 3 3-3 3z`} fill="#000" stroke="#000" />
                  </>
                )}
                <text x={x + w + (t.milestone ? 13 : 11)} y={y + 12} fontSize="10">{t.label ?? t.name}</text>
              </g>
            );
          })}
          {LINKS.map(([id, x]) => {
            const source = TASKS[id - 1];
            const y = (id - 1) * ROW + 9;
            const tip = y + 9;
            return (
              <g key={id}>
                <path d={`M${source.to * DAY - 1} ${y + 0.5}H${x + 0.5}V${tip - 4}`} fill="none" stroke="#3c4444" />
                <path d={`M${x - 3} ${tip - 5}h7l-3.500 5z`} fill="#3c4444" />
              </g>
            );
          })}
        </svg>
      </div>
    </div>
  );
};

/* ---------- side tabs ---------- */

const SideTab = ({ label, size, path }: { label: string; size: string; path: string }) => (
  <button className={clsx('relative w-full text-[12px]', size)}>
    <svg className="absolute top-0 left-0 h-[190px] w-full overflow-visible" aria-hidden="true">
      <path d={path} fill="url(#side-tab)" stroke="#3c78d8" />
    </svg>
    <span className="relative inline-block [writing-mode:vertical-rl]">{label}</span>
  </button>
);

const SideTabs = () => (
  <aside className="flex w-5 shrink-0 flex-col border-t border-l border-black bg-linear-to-b from-[#c6daf8] to-[#9cbcee] font-['Liberation_Sans',Arial,sans-serif] text-black">
    <svg className="absolute size-0" aria-hidden="true">
      <defs>
        <linearGradient id="side-tab" x1="0" x2="1" y1="0" y2="0">
          <stop offset="0" stopColor="#5088e0" />
          <stop offset="0.5" stopColor="#a8c8f6" />
          <stop offset="1" stopColor="#e6f0fe" />
        </linearGradient>
      </defs>
    </svg>
    <SideTab label="Tâches/Temps" size="h-[116px] pt-3" path="M-.5.5H13Q18.500.5 18.500 6V107L-.5 126z" />
    <SideTab label="Bibliothèque multimédia" size="h-[170px] pt-3" path="M-.5.5H13Q18.500.5 18.500 6V161L-.5 180z" />
    <SideTab label="Calcul" size="h-[72px]" path="M-.5.5H13Q18.500.5 18.500 6V53L-.5 72z" />
  </aside>
);

/* ---------- status bar and taskbar ---------- */

const StatusBar = () => (
  <footer className="flex h-[24px] shrink-0 items-center justify-end border-t border-b border-t-[#8e8f8f] border-b-white bg-[#f0eeec] pr-[2px] text-[11px] text-[#5f5f5f]">
    <label htmlFor="zoom">100%</label>
    <button aria-label="Zoom arrière" className="ml-[11px] flex size-4 items-center justify-center rounded-full border border-[#9a9a9a] bg-[#f6f6f6]">
      <span className="h-[2px] w-2 bg-[#9a9a9a]" />
    </button>
    <input
      id="zoom"
      type="range"
      defaultValue={50}
      className="mx-[7px] h-4 w-[56px] appearance-none bg-transparent bg-[linear-gradient(#a8a8a8,#a8a8a8)] bg-[length:100%_1px] bg-center bg-no-repeat [&::-webkit-slider-thumb]:h-[15px] [&::-webkit-slider-thumb]:w-[9px] [&::-webkit-slider-thumb]:appearance-none [&::-webkit-slider-thumb]:rounded-b-full [&::-webkit-slider-thumb]:border [&::-webkit-slider-thumb]:border-[#8a8a8a] [&::-webkit-slider-thumb]:bg-[#f8f8f8]"
    />
    <button aria-label="Zoom avant" className="flex size-4 items-center justify-center rounded-full border border-[#9a9a9a] bg-[#f6f6f6]">
      <svg viewBox="0 0 8 8" className="size-2"><path d="M4 0v8M0 4h8" stroke="#9a9a9a" strokeWidth="2" /></svg>
    </button>
  </footer>
);

const appButton = 'flex h-[39px] items-center justify-center rounded-[3px] border border-[#35566e] shadow-[inset_0_0_0_1px_rgba(255,255,255,0.6)]';

const Taskbar = () => (
  <div className="flex h-10 shrink-0 items-center border-t border-[#34495a] bg-[linear-gradient(70deg,#5d8aa6_0%,#5f8ca8_4%,#7ab0d4_7%,#7cb5dc_20%,#7ab2d8_30%,#84bce0_37%,#7ab0d6_45%,#84bce0_50%,#74acd0_54%,#84bce0_60%,#76aed2_68%,#7cb5dc_79%,#628eac_81%,#6590ae_100%)] text-white">
    <button aria-label="Démarrer" className="ml-[9px]">
      <svg viewBox="0 0 36 36" className="size-9">
        <defs>
          <radialGradient id="orb" cx="50%" cy="90%" r="80%">
            <stop offset="0" stopColor="#5ad8f8" />
            <stop offset="0.45" stopColor="#1c6ca8" />
            <stop offset="1" stopColor="#1a3c60" />
          </radialGradient>
        </defs>
        <circle cx="18" cy="18" r="17" fill="url(#orb)" stroke="#9cc4dc" />
        <path d="M3 14a16 16 0 0 1 30 0q-15 8-30 0z" fill="#fff" opacity=".3" />
        <path d="M9.500 8.500q4-3 8.500 0l-2 8.500q-4-2.500-8.500 0z" fill="#f0662c" />
        <path d="M19.500 9.500q4 2.500 9 0L26.500 18q-4.500 2.500-9 0z" fill="#8fca38" />
        <path d="M7 18.500q4-2.500 8.500 0L13.500 27q-4-3-8.500 0z" fill="#4ca4e8" />
        <path d="M17 19.500q4 2.500 9 0L24 28q-4.500 2.500-9 0z" fill="#fcc81c" />
      </svg>
    </button>
    <button aria-label="Lecteur multimédia" className="ml-[29px]">
      <svg viewBox="0 0 32 28" className="h-7 w-8">
        <rect x="2.500" y="1.500" width="20" height="23" fill="#9ccae8" stroke="#b4d8ee" />
        <path d="M23 3h2v22h-2M26 4h1v21h-1" fill="#c0def2" />
        <circle cx="12" cy="13" r="9" fill="#f47c20" stroke="#fbd0a8" />
        <path d="M9 8v10l8-5z" fill="#fff" />
      </svg>
    </button>
    <button aria-label="Explorateur" className="ml-[28px]">
      <svg viewBox="0 0 34 30" className="h-[30px] w-[34px]">
        <path d="M2 4l2-2h7l2 3h7l2-1h9l1 4v19H2z" fill="#f0dc8c" stroke="#c4a448" />
        <rect x="5" y="2" width="4" height="2" fill="#2c9c3c" />
        <rect x="13" y="4" width="4" height="2" fill="#d83c2c" />
        <rect x="22" y="6" width="4" height="2" fill="#3c84d8" />
        <path d="M2 9h30v17H2z" fill="#f8ecb0" />
        <path d="M6 29V18h22v11h-4v-6H10v6z" fill="#a8dcf4" stroke="#5ca4cc" />
      </svg>
    </button>
    <button aria-label="Chrome" className={clsx(appButton, 'ml-[15px] w-[60px] bg-linear-to-br from-[#d4e8f4] to-[#7cb0d4]')}>
      <svg viewBox="0 0 30 30" className="size-[30px]">
        <path d="M15 15L2.900 8A14 14 0 0 1 27.100 8z" fill="#dc3a2c" />
        <path d="M15 15L27.100 8A14 14 0 0 1 15 29z" fill="#fccc20" />
        <path d="M15 15V29A14 14 0 0 1 2.900 8z" fill="#3ea044" />
        <path d="M15 8h12.100l.9 3H15z" fill="#dc3a2c" />
        <circle cx="15" cy="15" r="6.500" fill="#fff" />
        <circle cx="15" cy="15" r="5" fill="#3a78d4" />
      </svg>
    </button>
    <button aria-label="Skype" className={clsx(appButton, 'ml-[2px] w-[60px] bg-linear-to-br from-[#d4e8f4] to-[#7cb0d4]')}>
      <svg viewBox="0 0 32 32" className="size-8">
        <path d="M1 7a7 7 0 0 1 11-5 13 13 0 0 1 16 15 7 7 0 0 1-10 10A13 13 0 0 1 3 12Q1 10 1 7z" fill="#10b0f0" />
        <path d="M20 10q-2-3-6-3-5 0-5 3.500t5.500 4.500 5.500 3.500-5 3.500q-4.500 0-6-3.500" fill="none" stroke="#fff" strokeWidth="3" strokeLinecap="round" />
        <path d="M17 19q6-3 8 2 6 1 5 4v6q-6 1-7-2-7-1-6-10z" fill="#fff" stroke="#7cc41c" strokeWidth="1.500" />
      </svg>
    </button>
    <button aria-label="Outlook" className={clsx(appButton, 'ml-[2px] w-[52px] bg-linear-to-br from-[#d4e8f4] to-[#8cbcdc]')}>
      <svg viewBox="0 0 32 32" className="size-8">
        <rect x="2" y="2" width="27" height="28" rx="2" fill="#fce8b0" stroke="#e89c1c" strokeWidth="2" />
        <ellipse cx="11" cy="12" rx="5.500" ry="7" fill="none" stroke="#ec8c10" strokeWidth="4.500" />
        <path d="M13 20h17v9H13l8-4z" fill="#fff4d4" stroke="#e8a83c" />
        <circle cx="25" cy="14" r="5" fill="#fff" stroke="#d08c2c" />
        <path d="M25 11v3l-2 1" stroke="#555" fill="none" />
      </svg>
    </button>
    <span className="h-[39px] w-1 rounded-r-xs border-r border-[#35566e] bg-[#9cc8e4]" />
    <span className="h-[39px] w-1 rounded-r-xs border-r border-[#35566e] bg-[#9cc8e4]" />
    <button aria-label="MindView" className={clsx(appButton, 'ml-[2px] w-[59px] bg-linear-to-br from-[#b4d4e8] to-[#f0f8fc]')}>
      <Logo className="size-8" />
    </button>

    <div className="ml-auto flex h-full items-center text-[11px]">
      <button aria-label="Langue" className="pb-1">FR</button>
      <button aria-label="Icônes masquées" className="ml-4">
        <svg viewBox="0 0 7 4" className="h-1 w-[7px]"><path d="M0 4h7L3.500 0z" fill="#fff" /></svg>
      </button>
      <svg viewBox="0 0 16 16" className="ml-[13px] size-4">
        <path d="M1.500 1v14.500" stroke="#fff" strokeWidth="2" />
        <path d="M3 2q4-1 6 1t6 1l-1.500 6q-3 0-5-1.500T3 9z" fill="#fff" stroke="#33485a" strokeWidth=".6" />
      </svg>
      <svg viewBox="0 0 16 16" className="ml-2 size-4">
        <rect x="1.500" y="3" width="8" height="12" fill="#c8d4dc" stroke="#222" />
        <rect x="3.500" y="1" width="4" height="2" fill="#333" />
        <path d="M10 2v3M14 2v3M9 5h6v3q0 2-3 2v4" stroke="#fff" strokeWidth="1.500" fill="none" />
        <path d="M2 8l7 7M9 8l-7 7" stroke="#e00000" strokeWidth="2" />
      </svg>
      <svg viewBox="0 0 16 16" className="ml-2 size-4">
        <path d="M1 5h3l4-4v14l-4-4H1z" fill="#f0f4f8" stroke="#44586a" strokeWidth=".6" />
        <circle cx="11" cy="10.500" r="4" fill="#fff" stroke="#e01818" strokeWidth="1.800" />
        <path d="M8.500 8l5 5" stroke="#e01818" strokeWidth="1.800" />
      </svg>
      <svg viewBox="0 0 16 16" className="ml-2 size-4">
        <path d="M0 11h2.500v3H0zM3.300 9.500h2.500V14H3.300zM6.600 7.500h2.500V14H6.600zM9.900 5.500h2.500V14H9.900zM13.200 3h2.500v11h-2.500z" fill="#fff" stroke="#33485a" strokeWidth=".4" />
      </svg>
      <svg viewBox="0 0 16 16" className="ml-2 size-4">
        <path d="M4 0l4 3-4 3-4-3zM12 0l4 3-4 3-4-3zM4 6l4 3-4 3-4-3zM12 6l4 3-4 3-4-3zM8 10l4 3-4 3-4-3z" fill="#b4e0fc" stroke="#2c84cc" strokeWidth=".5" />
        <circle cx="12" cy="12" r="4" fill="#1c9c34" />
        <path d="M10 12l1.500 1.500L14 10.500" stroke="#fff" strokeWidth="1.300" fill="none" />
      </svg>
      <div className="ml-4 w-[62px] text-center leading-[17px]">
        <div>12:23</div>
        <div>17/08/2012</div>
      </div>
      <button aria-label="Afficher le bureau" className="ml-[10px] h-full w-[14px] border border-[#44647c] bg-linear-to-br from-[#b4d0e2] to-[#5c88a4]" />
    </div>
  </div>
);

const App: React.FC = () => (
  <div className="flex h-screen w-full flex-col overflow-hidden bg-[#f0f0f0] font-['Open_Sans','Noto_Sans',sans-serif] text-black">
    <TitleBar />
    <Ribbon />
    <div className="flex min-h-0 flex-1 bg-[#d6dff0] pt-px">
      <main className="flex min-w-0 flex-1 flex-col bg-[#f0f0f0]">
        <DocumentTabs />
        <div className="flex min-h-0 flex-1 gap-[3px] border-r border-l border-[#a8a8a8] pt-px pr-px pb-[3px] pl-[2px]">
          <section className="flex w-[520px] shrink-0 flex-col border border-[#a8a8a8] bg-white p-px">
            <div className="min-h-0 flex-1 overflow-hidden">
              <TaskTable />
            </div>
            <ScrollBar thumb="w-[58%]" />
          </section>
          <section className="flex min-w-0 flex-1 flex-col border border-[#a8a8a8] bg-white p-px">
            <div className="min-h-0 flex-1 overflow-hidden">
              <GanttChart />
            </div>
            <ScrollBar thumb="w-full" />
          </section>
        </div>
      </main>
      <div className="w-[5px] shrink-0" />
      <SideTabs />
    </div>
    <StatusBar />
    <Taskbar />
  </div>
);

export default App;
